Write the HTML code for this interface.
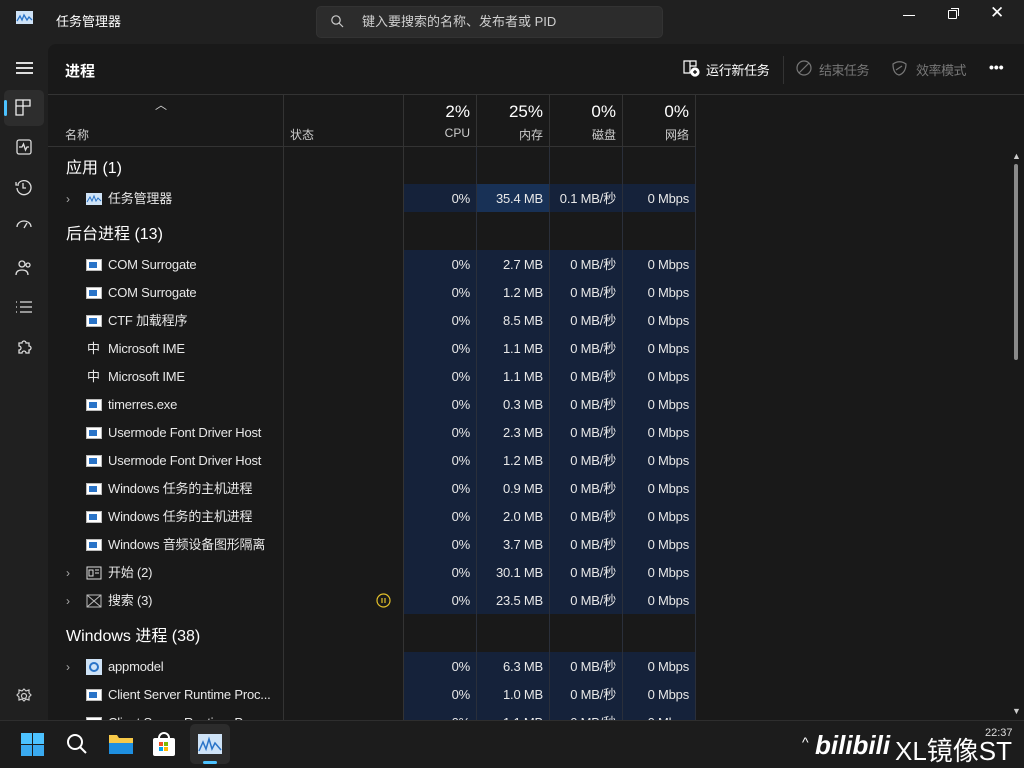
<!DOCTYPE html>
<html><head><meta charset="utf-8"><style>
*{margin:0;padding:0;box-sizing:border-box}
body{width:1024px;height:768px;background:#202020;font-family:"Liberation Sans","Noto Sans CJK SC",sans-serif;color:#fff;position:relative;overflow:hidden;font-size:13px}
.a{position:absolute}
.panel{left:48px;top:44px;width:976px;height:676px;background:#191919;border-top-left-radius:8px}
.vl{position:absolute;width:1px;background:#333}
.hl{position:absolute;height:1px;background:#333}
.heat{position:absolute;background:#15223a}
.r{position:absolute;left:0;width:1024px;height:28px;line-height:28px;font-size:13px;color:#e8e8e8;letter-spacing:-0.2px}
.r .n{position:absolute;left:108px}
.r .c{position:absolute;text-align:right}
.c1{left:404px;width:66px}.c2{left:477px;width:66px}.c3{left:550px;width:66px}.c4{left:623px;width:66px}
.ic{position:absolute;left:86px;top:8px;width:16px;height:12px;background:#fff;border:1px solid #bbb}
.ic:after{content:"";position:absolute;left:2px;top:2px;width:8px;height:6px;background:#2a74c8}
.chev{position:absolute;left:66px;color:#aaa;font-size:12px}
.grp{position:absolute;left:66px;font-size:16px;color:#fff;height:28px;line-height:28px}
</style></head><body>
<svg class="a" style="left:16px;top:11px" width="17" height="13"><rect width="17" height="13" fill="#cfe3f7"/><path d="M1 10 L4 5 L6 9 L8 4 L11 9 L13 6 L16 9" stroke="#2a74c8" fill="none" stroke-width="1.3"/></svg>
<div class="a" style="left:56px;top:11px;font-size:13px;color:#fff">任务管理器</div>
<div class="a" style="left:316px;top:6px;width:347px;height:32px;background:#2c2c2c;border-radius:5px;border:1px solid #333"></div>
<svg class="a" style="left:330px;top:14px" width="14" height="14"><circle cx="6" cy="6" r="4.2" stroke="#ccc" fill="none" stroke-width="1.2"/><path d="M9 9 L13 13" stroke="#ccc" stroke-width="1.2"/></svg>
<div class="a" style="left:362px;top:11px;font-size:13px;color:#cfcfcf">键入要搜索的名称、发布者或 PID</div>
<div class="a" style="left:903px;top:15px;width:12px;height:1px;background:#fff"></div>
<div class="a" style="left:948px;top:10px;width:9px;height:9px;border:1px solid #fff;border-radius:1px"></div>
<div class="a" style="left:951px;top:8px;width:8px;height:8px;border-top:1px solid #fff;border-right:1px solid #fff"></div>
<div class="a" style="left:990px;top:3px;font-size:17px;color:#fff">✕</div>
<div class="a" style="left:16px;top:62px;width:17px;height:1.5px;background:#ddd;box-shadow:0 5px 0 #ddd,0 10px 0 #ddd"></div>
<div class="a" style="left:4px;top:90px;width:40px;height:36px;background:#2d2d2d;border-radius:5px"></div>
<div class="a" style="left:4px;top:100px;width:3px;height:16px;background:#4cc2ff;border-radius:2px"></div>
<svg class="a" style="left:15px;top:99px" width="17" height="17" fill="none" stroke="#eee" stroke-width="1.3"><path d="M1 1h7v15H1zM8 1h7v6H8zM1 7h7"/></svg>
<svg class="a" style="left:16px;top:139px" width="16" height="16" fill="none" stroke="#ddd" stroke-width="1.3"><rect x="1" y="1" width="14" height="14" rx="2"/><path d="M3 8h3l1.5-3 2 6 1.5-3h2"/></svg>
<svg class="a" style="left:15px;top:179px" width="17" height="17" fill="none" stroke="#ddd" stroke-width="1.3"><path d="M3 5A7 7 0 1 1 2 9M1 3v3h3M8 4v5h3"/></svg>
<svg class="a" style="left:15px;top:219px" width="18" height="16" fill="none" stroke="#ddd" stroke-width="1.3"><path d="M2 8a7 6 0 0 1 14 0M9 9l3-5"/></svg>
<svg class="a" style="left:15px;top:259px" width="18" height="17" fill="none" stroke="#ddd" stroke-width="1.3"><circle cx="7" cy="5" r="3"/><path d="M1 16c0-4 3-5 6-5s6 1 6 5"/><circle cx="13" cy="6" r="2"/></svg>
<svg class="a" style="left:15px;top:299px" width="18" height="16" fill="none" stroke="#ddd" stroke-width="1.3"><path d="M1 3h1M5 3h12M1 8h1M5 8h12M1 13h1M5 13h12"/></svg>
<svg class="a" style="left:15px;top:339px" width="18" height="18" fill="none" stroke="#ddd" stroke-width="1.3"><path d="M4 4h3a2 2 0 0 1 4 0h3v3a2 2 0 0 1 0 4v3h-3a2 2 0 0 0-4 0H4v-3a2 2 0 0 0 0-4z"/></svg>
<svg class="a" style="left:16px;top:688px" width="16" height="16" fill="none" stroke="#ccc" stroke-width="1.2"><circle cx="8" cy="8" r="2.5"/><path d="M8 1l2 2 3-1 0 3 2 2-2 2 0 3-3-1-2 2-2-2-3 1 0-3-2-2 2-2 0-3 3 1z"/></svg>
<div class="a panel"></div>
<div class="a" style="left:65px;top:60px;font-size:15px;font-weight:bold">进程</div>
<svg class="a" style="left:683px;top:60px" width="17" height="17" fill="none" stroke="#fff" stroke-width="1.2"><path d="M1 1h6v12H1zM7 1h6v5H7z"/><circle cx="12" cy="12" r="4" fill="#fff"/><path d="M12 10v4M10 12h4" stroke="#000"/></svg>
<div class="a" style="left:706px;top:60px;font-size:13px;letter-spacing:-0.3px">运行新任务</div>
<div class="a" style="left:783px;top:56px;width:1px;height:28px;background:#333"></div>
<svg class="a" style="left:796px;top:60px" width="16" height="16" fill="none" stroke="#777" stroke-width="1.2"><circle cx="8" cy="8" r="7"/><path d="M3 13L13 3"/></svg>
<div class="a" style="left:819px;top:60px;font-size:13px;color:#777;letter-spacing:-0.5px">结束任务</div>
<svg class="a" style="left:891px;top:60px" width="17" height="16" fill="none" stroke="#777" stroke-width="1.2"><path d="M2 4c4-3 9-3 13 0 0 6-3 10-7 11-4-1-6-5-6-11zM5 10l6-4"/></svg>
<div class="a" style="left:916px;top:60px;font-size:13px;color:#777;letter-spacing:-0.5px">效率模式</div>
<div class="a" style="left:989px;top:59px;font-size:14px;font-weight:bold">•••</div>
<div class="hl" style="left:48px;top:94px;width:976px"></div>
<div class="hl" style="left:48px;top:146px;width:648px"></div>
<div class="vl" style="left:283px;top:95px;height:625px"></div>
<div class="vl" style="left:403px;top:95px;height:625px"></div>
<div class="vl" style="left:476px;top:95px;height:52px"></div>
<div class="vl" style="left:549px;top:95px;height:52px"></div>
<div class="vl" style="left:622px;top:95px;height:52px"></div>
<div class="vl" style="left:695px;top:95px;height:52px"></div>
<div class="a" style="left:155px;top:96px;font-size:12px;color:#ccc">︿</div>
<div class="a" style="left:65px;top:126px;font-size:12px;color:#ccc">名称</div>
<div class="a" style="left:290px;top:126px;font-size:12px;color:#ccc">状态</div>
<div class="a" style="left:404px;top:102px;width:66px;text-align:right;font-size:17px">2%</div>
<div class="a" style="left:477px;top:102px;width:66px;text-align:right;font-size:17px">25%</div>
<div class="a" style="left:550px;top:102px;width:66px;text-align:right;font-size:17px">0%</div>
<div class="a" style="left:623px;top:102px;width:66px;text-align:right;font-size:17px">0%</div>
<div class="a" style="left:404px;top:126px;width:66px;text-align:right;font-size:12px;color:#ccc">CPU</div>
<div class="a" style="left:477px;top:126px;width:66px;text-align:right;font-size:12px;color:#ccc">内存</div>
<div class="a" style="left:550px;top:126px;width:66px;text-align:right;font-size:12px;color:#ccc">磁盘</div>
<div class="a" style="left:623px;top:126px;width:66px;text-align:right;font-size:12px;color:#ccc">网络</div>
<div class="heat" style="left:404px;top:184px;width:292px;height:28px"></div>
<div class="heat" style="left:477px;top:184px;width:72px;height:28px;background:#183156"></div>
<div class="heat" style="left:404px;top:250px;width:292px;height:364px"></div>
<div class="heat" style="left:404px;top:652px;width:292px;height:68px"></div>
<div class="vl" style="left:476px;top:147px;height:573px;background:#2a2f3a"></div>
<div class="vl" style="left:549px;top:147px;height:573px;background:#2a2f3a"></div>
<div class="vl" style="left:622px;top:147px;height:573px;background:#2a2f3a"></div>
<div class="vl" style="left:695px;top:147px;height:573px;background:#2a2f3a"></div>
<div class="grp" style="top:155px">应用 (1)</div>
<div class="grp" style="top:221px">后台进程 (13)</div>
<div class="grp" style="top:623px">Windows 进程 (38)</div>
<div class="r" style="top:185px"><span class="chev">›</span><svg class="a" style="left:86px;top:8px" width="16" height="12"><rect width="16" height="12" fill="#cfe3f7"/><path d="M1 9L4 4 6 8 8 3 10 8 12 5 15 8" stroke="#2a74c8" fill="none"/></svg><span class="n">任务管理器</span><span class="c c1">0%</span><span class="c c2">35.4 MB</span><span class="c c3">0.1 MB/秒</span><span class="c c4">0 Mbps</span></div>
<div class="r" style="top:251px"><i class="ic"></i><span class="n">COM Surrogate</span><span class="c c1">0%</span><span class="c c2">2.7 MB</span><span class="c c3">0 MB/秒</span><span class="c c4">0 Mbps</span></div>
<div class="r" style="top:279px"><i class="ic"></i><span class="n">COM Surrogate</span><span class="c c1">0%</span><span class="c c2">1.2 MB</span><span class="c c3">0 MB/秒</span><span class="c c4">0 Mbps</span></div>
<div class="r" style="top:307px"><i class="ic"></i><span class="n">CTF 加载程序</span><span class="c c1">0%</span><span class="c c2">8.5 MB</span><span class="c c3">0 MB/秒</span><span class="c c4">0 Mbps</span></div>
<div class="r" style="top:335px"><span class="a" style="left:87px">中</span><span class="n">Microsoft IME</span><span class="c c1">0%</span><span class="c c2">1.1 MB</span><span class="c c3">0 MB/秒</span><span class="c c4">0 Mbps</span></div>
<div class="r" style="top:363px"><span class="a" style="left:87px">中</span><span class="n">Microsoft IME</span><span class="c c1">0%</span><span class="c c2">1.1 MB</span><span class="c c3">0 MB/秒</span><span class="c c4">0 Mbps</span></div>
<div class="r" style="top:391px"><i class="ic"></i><span class="n">timerres.exe</span><span class="c c1">0%</span><span class="c c2">0.3 MB</span><span class="c c3">0 MB/秒</span><span class="c c4">0 Mbps</span></div>
<div class="r" style="top:419px"><i class="ic"></i><span class="n">Usermode Font Driver Host</span><span class="c c1">0%</span><span class="c c2">2.3 MB</span><span class="c c3">0 MB/秒</span><span class="c c4">0 Mbps</span></div>
<div class="r" style="top:447px"><i class="ic"></i><span class="n">Usermode Font Driver Host</span><span class="c c1">0%</span><span class="c c2">1.2 MB</span><span class="c c3">0 MB/秒</span><span class="c c4">0 Mbps</span></div>
<div class="r" style="top:475px"><i class="ic"></i><span class="n">Windows 任务的主机进程</span><span class="c c1">0%</span><span class="c c2">0.9 MB</span><span class="c c3">0 MB/秒</span><span class="c c4">0 Mbps</span></div>
<div class="r" style="top:503px"><i class="ic"></i><span class="n">Windows 任务的主机进程</span><span class="c c1">0%</span><span class="c c2">2.0 MB</span><span class="c c3">0 MB/秒</span><span class="c c4">0 Mbps</span></div>
<div class="r" style="top:531px"><i class="ic"></i><span class="n">Windows 音频设备图形隔离</span><span class="c c1">0%</span><span class="c c2">3.7 MB</span><span class="c c3">0 MB/秒</span><span class="c c4">0 Mbps</span></div>
<div class="r" style="top:559px"><span class="chev">›</span><svg class="a" style="left:86px;top:7px" width="16" height="14" fill="none" stroke="#ddd"><rect x="1" y="1" width="14" height="12"/><path d="M3 4h4v6H3zM9 4h4M9 7h4" /></svg><span class="n">开始 (2)</span><span class="c c1">0%</span><span class="c c2">30.1 MB</span><span class="c c3">0 MB/秒</span><span class="c c4">0 Mbps</span></div>
<div class="r" style="top:587px"><span class="chev">›</span><svg class="a" style="left:86px;top:7px" width="16" height="14" fill="none" stroke="#bbb"><rect x="1" y="1" width="14" height="12"/><path d="M1 1l14 12M15 1L1 13"/></svg><span class="n">搜索 (3)</span><svg class="a" style="left:376px;top:6px" width="15" height="15" fill="none" stroke="#e3c02a" stroke-width="1.2"><circle cx="7.5" cy="7.5" r="6.5"/><path d="M6 5v5M9 5v5"/></svg><span class="c c1">0%</span><span class="c c2">23.5 MB</span><span class="c c3">0 MB/秒</span><span class="c c4">0 Mbps</span></div>
<div class="r" style="top:653px"><span class="chev">›</span><svg class="a" style="left:86px;top:6px" width="16" height="16"><rect width="16" height="16" fill="#cfe3f7"/><circle cx="8" cy="8" r="4" fill="none" stroke="#2a74c8" stroke-width="2"/></svg><span class="n">appmodel</span><span class="c c1">0%</span><span class="c c2">6.3 MB</span><span class="c c3">0 MB/秒</span><span class="c c4">0 Mbps</span></div>
<div class="r" style="top:681px"><i class="ic"></i><span class="n">Client Server Runtime Proc...</span><span class="c c1">0%</span><span class="c c2">1.0 MB</span><span class="c c3">0 MB/秒</span><span class="c c4">0 Mbps</span></div>
<div class="r" style="top:709px"><i class="ic"></i><span class="n">Client Server Runtime Proc...</span><span class="c c1">0%</span><span class="c c2">1.1 MB</span><span class="c c3">0 MB/秒</span><span class="c c4">0 Mbps</span></div>
<div class="a" style="left:1012px;top:151px;font-size:9px;color:#ccc">▲</div>
<div class="a" style="left:1014px;top:164px;width:4px;height:196px;background:#8a8a8a;border-radius:2px"></div>
<div class="a" style="left:1012px;top:706px;font-size:9px;color:#ccc">▼</div>
<div class="a" style="left:0;top:720px;width:1024px;height:48px;background:#1c1c1c;border-top:1px solid #2e2e2e"></div>
<svg class="a" style="left:21px;top:733px" width="23" height="23"><rect x="0" y="0" width="11" height="11" fill="#4cc2ff"/><rect x="12" y="0" width="11" height="11" fill="#4cc2ff"/><rect x="0" y="12" width="11" height="11" fill="#3aaaf0"/><rect x="12" y="12" width="11" height="11" fill="#3aaaf0"/></svg>
<svg class="a" style="left:66px;top:733px" width="22" height="22" fill="none" stroke="#fff" stroke-width="2"><circle cx="9" cy="9" r="7"/><path d="M14 14l6 6"/></svg>
<svg class="a" style="left:108px;top:733px" width="26" height="22"><path d="M1 2h8l2 3h14v16H1z" fill="#f7c948"/><rect x="1" y="10" width="24" height="11" fill="#1e8fe0"/></svg>
<svg class="a" style="left:152px;top:731px" width="24" height="26"><path d="M7 7a5 5 0 0 1 10 0" stroke="#fff" fill="none" stroke-width="2"/><rect x="1" y="7" width="22" height="18" rx="2" fill="#fff"/><rect x="7" y="11" width="4" height="4" fill="#f25022"/><rect x="12" y="11" width="4" height="4" fill="#7fba00"/><rect x="7" y="16" width="4" height="4" fill="#00a4ef"/><rect x="12" y="16" width="4" height="4" fill="#ffb900"/></svg>
<div class="a" style="left:190px;top:724px;width:40px;height:40px;background:#2c2c2c;border-radius:5px"></div>
<svg class="a" style="left:198px;top:734px" width="24" height="20"><rect width="24" height="20" fill="#cfe3f7"/><path d="M1 17L5 8 8 15 11 5 14 15 17 9 23 16" stroke="#2a74c8" fill="none" stroke-width="1.5"/></svg>
<div class="a" style="left:203px;top:761px;width:14px;height:3px;background:#4cc2ff;border-radius:2px"></div>
<div class="a" style="left:802px;top:734px;font-size:14px;color:#fff">^</div>
<div class="a" style="left:815px;top:730px;font-size:26px;color:#fff;font-weight:bold;font-style:italic">bilibili</div>
<div class="a" style="left:895px;top:731px;font-size:26px;color:#fff">XL镜像ST</div>
<div class="a" style="left:985px;top:727px;font-size:11px;color:#ddd">22:37</div>
</body></html>
